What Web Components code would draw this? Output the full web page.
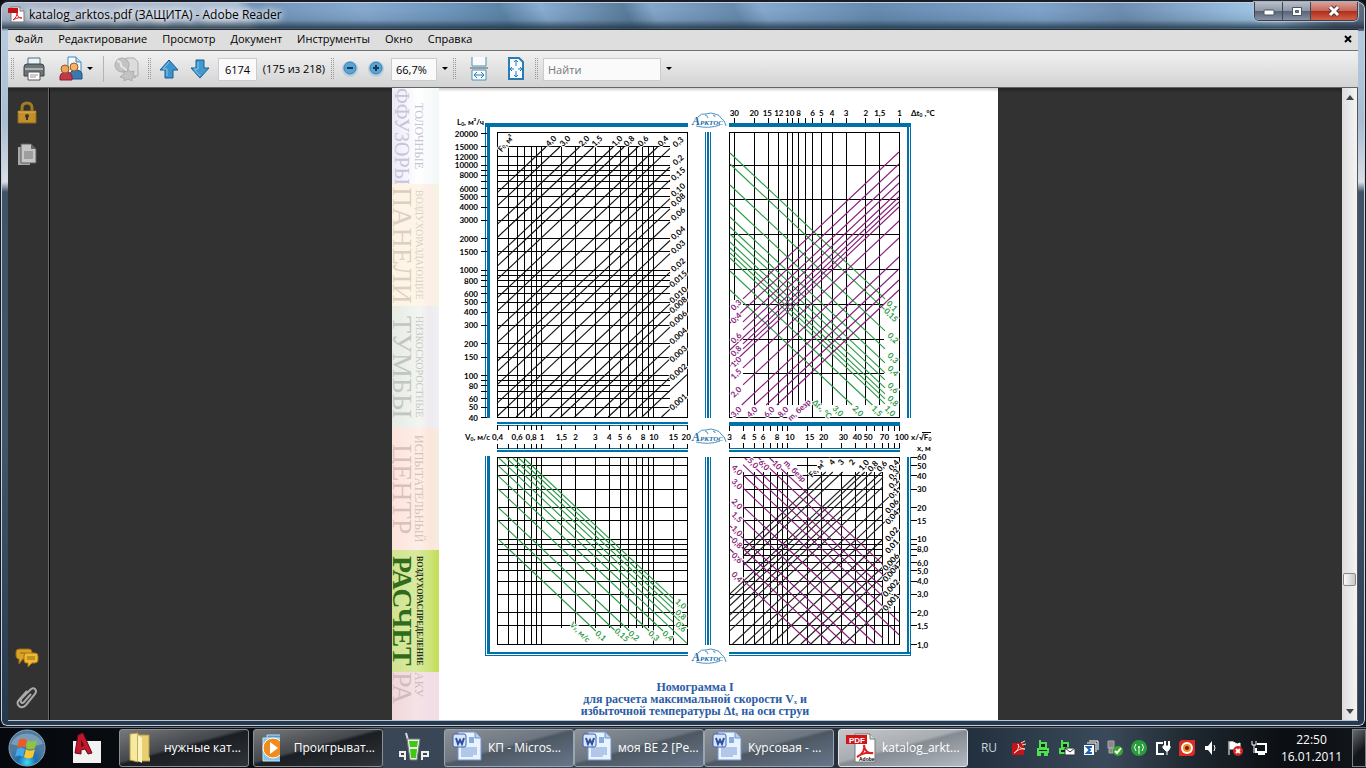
<!DOCTYPE html>
<html lang="ru">
<head>
<meta charset="utf-8">
<title>katalog_arktos.pdf (ЗАЩИТА) - Adobe Reader</title>
<style>
  body {
    margin: 0;
    height: 100vh;
    display: flex;
    flex-direction: column;
    overflow: hidden;
    background: #0c1015;
    font: 12px/16px "Open Sans", "Noto Sans", sans-serif;
    color: #000;
  }
</style>
</head>
<body>
<reader-window>
  <title-bar slot="title">katalog_arktos.pdf (ЗАЩИТА) - Adobe Reader</title-bar>
  <menu-bar slot="menu"></menu-bar>
  <tool-bar slot="tools"></tool-bar>
  <side-panel slot="side"></side-panel>
  <pdf-page>
    <side-tab slot="tabs" tone="blue" big="ФФУЗОРЫ" size="m">ТОЛОЧНЫЕ</side-tab>
    <side-tab slot="tabs" tone="yellow" big="ПАНЕЛИ" size="s">ВОЗДУХОРАЗДАЮЩИЕ</side-tab>
    <side-tab slot="tabs" tone="gray" big="ТУМБЫ" size="s">НИЗКОСКОРОСТНЫЕ</side-tab>
    <side-tab slot="tabs" tone="rose" big="ЦЕНТР" size="m">ИСПЫТАТЕЛЬНЫЙ</side-tab>
    <side-tab slot="tabs" tone="green" big="РАСЧЕТ" size="xs">ВОЗДУХОРАСПРЕДЕЛЕНИЕ</side-tab>
    <side-tab slot="tabs" tone="pink" big="РА" size="m">АКУ</side-tab>
    <nomogram-chart></nomogram-chart>
  </pdf-page>
</reader-window>
<task-bar></task-bar>

<script>
const define = (name, html, setup) => {
  customElements.define(name, class extends HTMLElement {
    constructor() {
      super();
      this.attachShadow({ mode: 'open' });
      this.shadowRoot.innerHTML = html;
    }

    connectedCallback() {
      if (setup) {
        setup(this, this.shadowRoot);
      }
    }
  });
};

const buttonReset = `
  button {
    display: flex;
    align-items: center;
    justify-content: center;
    margin: 0;
    padding: 0;
    border: 0;
    background: none;
    font: inherit;
    color: inherit;
  }
`;

define('reader-window', `
  <style>
    :host {
      flex: 1;
      min-height: 0;
      display: flex;
      flex-direction: column;
      box-sizing: border-box;
      padding: 0 7px 5px;
      border: 1px solid #15181f;
      border-top: 2px solid #1a1d28;
      border-radius: 8px 8px 7px 7px;
      background:
        linear-gradient(#fff, #fff) top / 100% 1px no-repeat,
        linear-gradient(180deg, transparent 0 8px, rgba(20, 40, 60, 0.1) 18px, rgba(30, 48, 62, 0.8) 26px, transparent 28px),
        linear-gradient(65deg, #a9b6c9 0 7%, #adbfd5 18%, #6f93b6 19%, #86a9cf 27%, #6f96bd 33%, #5d84a6 37%, #88acd2 40%, #5b7d9b 46%, #84a6ca 48%, #688bad 54%, #85a8ce 56%, #668bb0 64%, #7fa3cb 76%, #6e8db0 82%, #a4cbeb 93%, #5e6a80 97%) top / 100% 29px no-repeat,
        linear-gradient(180deg, #b6cbe0 29px, #a9bdd3 120px, #d9dfe6 180px, #3f5267 190px, #41556c 60%, #25384e);
      box-shadow: inset 0 0 0 1px #c5d0dc;
    }

    #client {
      flex: 1;
      min-height: 0;
      display: flex;
      flex-direction: column;
      border-top: 1px solid #222b31;
      border-bottom: 1px solid #b8c6d4;
      background: #323232;
    }

    #body {
      flex: 1;
      min-height: 0;
      display: flex;
    }

    #doc {
      flex: 1;
      min-width: 0;
      display: flex;
      justify-content: center;
      overflow: hidden;
      background: linear-gradient(#232323, #323232 5px);
    }
  </style>

  <slot name="title"></slot>
  <div id="client">
    <slot name="menu"></slot>
    <slot name="tools"></slot>
    <div id="body">
      <slot name="side"></slot>
      <div id="doc"><slot></slot></div>
      <scroll-bar></scroll-bar>
    </div>
  </div>
`);

define('title-bar', `
  <style>
    ${buttonReset}
    :host {
      display: flex;
      height: 27px;
      align-items: flex-start;
    }

    #icon {
      width: 17px;
      height: 17px;
      margin: 4px 4px 0 0;
    }

    #label {
      flex: 1;
      line-height: 26px;
      text-shadow: 0 0 6px #fff, 0 0 8px #fff, 0 0 10px #fff;
    }

    #controls {
      display: flex;
      overflow: hidden;
      height: 18px;
      border: 1px solid #3b424e;
      border-top: 0;
      border-radius: 0 0 5px 5px;
      box-shadow: 0 0 1px 1px #b9c2cf;
    }

    #controls button {
      width: 28px;
      height: 18px;
      border-right: 1px solid #3e4654;
      background: linear-gradient(#b9bfca, #8f98a8 48%, #566173 50%, #8792a4);
    }

    #controls button:last-child {
      width: 46px;
      border: 0;
      background: linear-gradient(#d8a198, #c5685a 48%, #ad2d18 50%, #d0614a);
    }
  </style>

  <svg id="icon" viewBox="0 0 17 17">
    <path d="M3 1h9l4 4v11H3z" fill="#fff" stroke="#777"/>
    <path d="M12 1v4h4" fill="#ddd" stroke="#777"/>
    <path d="M0 2h10v5H0z" fill="#c80f14"/>
    <path d="M5 14c3-2 4-5 4-7 0 3 2 5 5 5-4-1-7 1-9 2z" fill="none" stroke="#e02020"/>
  </svg>
  <span id="label"><slot></slot></span>
  <div id="controls">
    <button aria-label="Свернуть"><svg width="12" height="10"><rect x="1" y="4" width="10" height="5" rx="1" fill="#fff" stroke="#4b5564"/></svg></button>
    <button aria-label="Развернуть"><svg width="12" height="11"><path d="M1.500 1.500h9v8h-9z" fill="#fff" stroke="#4b5564"/><path d="M4.500 4.500h3v2h-3z" fill="#77859a" stroke="#4b5564"/></svg></button>
    <button aria-label="Закрыть"><svg width="14" height="12"><path d="M3 2l8 8M11 2l-8 8" stroke="#5d3035" stroke-width="5"/><path d="M3 2l8 8M11 2l-8 8" stroke="#fff" stroke-width="3"/></svg></button>
  </div>
`);

define('menu-bar', `
  <style>
    ${buttonReset}
    :host {
      display: flex;
      height: 20px;
      gap: 15px;
      padding: 0 6px 0 7px;
      background: #dedede;
      border-bottom: 1px solid #707070;
      font-size: 11px;
    }

    button {
      height: 18px;
    }

    #close {
      margin-left: auto;
    }
  </style>

  <button>Файл</button>
  <button>Редактирование</button>
  <button>Просмотр</button>
  <button>Документ</button>
  <button>Инструменты</button>
  <button>Окно</button>
  <button>Справка</button>
  <button id="close" aria-label="Закрыть документ"><svg width="8" height="8"><path d="M1 1l6 6M7 1l-6 6" stroke="#000" stroke-width="2"/></svg></button>
`);

const caret = '<svg width="6" height="4"><path d="M0 0h6l-3 3z"/></svg>';

define('tool-bar', `
  <style>
    ${buttonReset}
    :host {
      display: flex;
      align-items: center;
      height: 36px;
      gap: 4px;
      padding-left: 3px;
      border-bottom: 1px solid #666;
      background: linear-gradient(#f1f1f1, #d3d3d3);
      font-size: 11px;
    }

    button {
      height: 30px;
    }

    i {
      width: 4px;
      height: 22px;
      background:
        repeating-linear-gradient(#999 0 1px, transparent 1px 2px) 0 0 / 1px 100% no-repeat,
        repeating-linear-gradient(#999 0 1px, transparent 1px 2px) 2px 0 / 1px 100% no-repeat;
    }

    hr {
      width: 1px;
      height: 26px;
      margin: 0;
      border: 0;
      background: #b5b5b5;
    }

    input {
      box-sizing: border-box;
      height: 23px;
      margin: 0;
      padding: 0 4px;
      border: 1px solid #c8cdd2;
      background: #fafafa;
      font: inherit;
      color: #000;
    }

    #pageno {
      width: 39px;
      text-align: center;
    }

    #zoom {
      width: 46px;
    }

    #find {
      width: 118px;
    }

    input::placeholder {
      color: #777;
    }

    label {
      width: 66px;
      text-align: center;
      white-space: nowrap;
    }

    .w8 { width: 8px; }
    .w22 { width: 22px; }
    .w26 { width: 26px; }
    .w28 { width: 28px; }
    .w30 { width: 30px; }
    .w36 { width: 36px; }
    .w46 { width: 46px; gap: 4px; }
  </style>

  <i></i>
  <button class="w30" aria-label="Печать">
    <svg width="24" height="24">
      <path d="M6 1h12v9H6z" fill="#e8f4f8" stroke="#55707c"/>
      <path d="M2 10q0-3 3-3h14q3 0 3 3v9H2z" fill="#6c7478" stroke="#3d4346"/>
      <path d="M3 12h18" stroke="#a9b1b4" stroke-width="2"/>
      <path d="M6 15h12v8H6z" fill="#fff" stroke="#555"/>
      <path d="M8 18h8M8 20h6" stroke="#999"/>
    </svg>
  </button>
  <button class="w46" aria-label="Совместная работа">
    <svg width="24" height="26">
      <path d="M9 1h8l5 5v14H9z" fill="#f8fcff" stroke="#3a87bd"/>
      <path d="M17 1v5h5" fill="#b7dcf1" stroke="#3a87bd"/>
      <path d="M11 21q-1-7 6-7t6 7v2H11z" fill="#3778b5" stroke="#205080"/>
      <circle cx="15" cy="11" r="4" fill="#f2b36b" stroke="#9b5a22"/>
      <path d="M1 24q-1-8 6-8t6 8z" fill="#c23a48" stroke="#862330"/>
      <circle cx="6" cy="13" r="4" fill="#e9a45e" stroke="#9b5a22"/>
    </svg>
    ${caret}
  </button>
  <hr>
  <button class="w36" aria-label="Создать PDF">
    <svg width="26" height="26" fill="#c3c3c3" stroke="#adadad">
      <path d="M13 2h8l4 4v14H13z" fill="#dcdcdc"/>
      <circle cx="9" cy="9" r="7"/>
      <path d="M4 5q5 1 4 5l7 5" fill="none" stroke="#e6e6e6" stroke-width="2"/>
      <path d="M15 13l2 3 4-1-1 4 3 2-4 1v3l-4-2-4 2v-3l-4-1 4-3-1-3 4 1z"/>
    </svg>
  </button>
  <i></i>
  <button class="w26" aria-label="Предыдущая страница"><svg width="22" height="22"><path d="M11 2l9 10h-5v8H7v-8H2z" fill="#3d93cc" stroke="#175f92"/><path d="M11 4l-6 7h4v7" fill="none" stroke="#8dc7e8"/></svg></button>
  <button class="w28" aria-label="Следующая страница"><svg width="22" height="22"><path d="M11 20l9-10h-5V2H7v8H2z" fill="#4198d1" stroke="#175f92"/><path d="M9 4v7H5l6 7" fill="none" stroke="#8dc7e8"/></svg></button>
  <input id="pageno" value="6174">
  <label for="pageno">(175 из 218)</label>
  <i></i>
  <button class="w22" aria-label="Уменьшить"><svg width="18" height="18"><circle cx="9" cy="9" r="8" fill="#b5cfdf"/><circle cx="9" cy="8" r="6" fill="#5ba3d3" stroke="#3f7fa9"/><path d="M6 8h6" stroke="#103c60" stroke-width="2"/></svg></button>
  <button class="w22" aria-label="Увеличить"><svg width="18" height="18"><circle cx="9" cy="9" r="8" fill="#b5cfdf"/><circle cx="9" cy="8" r="6" fill="#5ba3d3" stroke="#3f7fa9"/><path d="M6 8h6M9 5v6" stroke="#103c60" stroke-width="2"/></svg></button>
  <input id="zoom" value="66,7%" aria-label="Масштаб">
  <button class="w8" aria-label="Выбрать масштаб">${caret}</button>
  <i></i>
  <button class="w36" aria-label="По ширине">
    <svg width="18" height="24"><path d="M2 0v9h14V0M2 23V13h14v10z" fill="#f7fbff" stroke="#4f8fb9"/><path d="M0 11h18" stroke="#555"/><path d="M4 18h10M7 15l-3 3 3 3M11 15l3 3-3 3" fill="none" stroke="#287bb3"/></svg>
  </button>
  <button class="w30" aria-label="Страница целиком">
    <svg width="18" height="24"><path d="M2 1h10l4 4v17H2z" fill="#f7fbff" stroke="#287bb3" stroke-width="2"/><path d="M9 3v6M9 14v6M3 12h4M11 12h4M7 5l2-2 2 2M7 18l2 2 2-2M5 10l-2 2 2 2M13 10l2 2-2 2" fill="none" stroke="#287bb3"/></svg>
  </button>
  <i></i>
  <input id="find" placeholder="Найти" aria-label="Найти">
  <button class="w8" aria-label="Параметры поиска">${caret}</button>
`);

define('side-panel', `
  <style>
    ${buttonReset}
    :host {
      display: flex;
      flex-direction: column;
      align-items: center;
      gap: 18px;
      box-sizing: border-box;
      width: 42px;
      padding: 13px 3px 10px 0;
      border-right: 1px solid #080808;
      background: linear-gradient(#232323, #323232 5px);
      box-shadow: inset -1px 0 #686868;
    }

    .space {
      flex: 1;
    }
  </style>

  <button aria-label="Защита"><svg width="20" height="24"><path d="M5 12V7q0-5 5-5t5 5v5" fill="none" stroke="#a27b20" stroke-width="3"/><path d="M1 10h18v12H1z" fill="#c1902b" stroke="#8c651a"/><path d="M1 11h18" stroke="#dfb55b"/><circle cx="10" cy="15" r="2" fill="#3a342a"/><path d="M10 15v4" stroke="#3a342a" stroke-width="2"/></svg></button>
  <button aria-label="Страницы"><svg width="20" height="24"><path d="M1 4h12v18H1z" fill="#a8a8a8"/><path d="M4 1h10l5 5v14H4z" fill="#c6c6c6" stroke="#5d5d5d"/><path d="M14 1v5h5" fill="#666"/><path d="M7 9h9M7 11h9M7 13h9M7 15h9" stroke="#777"/></svg></button>
  <span class="space"></span>
  <button aria-label="Комментарии"><svg width="24" height="20"><path d="M4 1h10q3 0 3 3v5q0 2-3 2H8l-4 5v-5H3q-2-1-2-3V4q0-3 3-3z" fill="#d9a424" stroke="#9c641a"/><path d="M11 5h9q3 0 3 3v4q0 3-3 3h-3l-4 4v-4h-2q-2 0-2-3V8q0-3 2-3z" fill="#edbb2c" stroke="#a3721b"/><path d="M5 5h5M12 9h8M12 11h8" stroke="#8c671b"/></svg></button>
  <button aria-label="Вложения"><svg width="22" height="24" fill="none" stroke="#aaa" stroke-width="2"><path d="M15 8l-7 8q-2 2-3 0t1-4l8-8q3-3 5-1t0 5l-9 11q-4 4-7 1t0-6l8-9"/></svg></button>
`);

define('scroll-bar', `
  <style>
    ${buttonReset}
    :host {
      display: flex;
      flex-direction: column;
      align-items: center;
      width: 15px;
      border-right: 1px solid #555;
      background: linear-gradient(90deg, #ddd, #f4f4f4);
    }

    button {
      width: 15px;
      height: 17px;
    }

    #track {
      flex: 1;
      display: grid;
      grid-template-rows: 466fr 13px 117fr;
    }

    #thumb {
      grid-row: 2;
      width: 13px;
      height: 13px;
      border: 1px solid #888;
      border-radius: 2px;
      background: linear-gradient(90deg, #fafafa, #c8c8cc);
    }
  </style>
  <button aria-label="Вверх"><svg width="8" height="6"><path d="M4 1l4 5H0z" fill="#444"/></svg></button>
  <div id="track"><button id="thumb" aria-label="Положение"></button></div>
  <button aria-label="Вниз"><svg width="8" height="6"><path d="M4 5l4-5H0z" fill="#444"/></svg></button>
`);

define('pdf-page', `
  <style>
    :host {
      display: flex;
      width: 606px;
      margin-right: 2px;
      background: linear-gradient(#d0d0d0, #fff 4px);
    }

    #tabs {
      display: flex;
      flex-direction: column;
      width: 47px;
    }

    main {
      flex: 1;
    }

    p {
      margin: 3px 47px 0 0;
      text-align: center;
      font: bold 12px/12px "Liberation Serif", serif;
      white-space: nowrap;
      color: #2a5ca6;
    }

    sub {
      font-size: 6px;
      line-height: 0;
      vertical-align: -1px;
    }
  </style>

  <div id="tabs"><slot name="tabs"></slot></div>
  <main>
    <slot></slot>
    <p>Номограмма I<br>для расчета максимальной скорости V<sub>x</sub> и<br>избыточной температуры Δt<sub>x</sub> на оси струи</p>
  </main>
`);

define('side-tab', `
  <style>
    :host {
      display: flex;
      flex-direction: row-reverse;
      justify-content: flex-end;
      flex: none;
      height: 122px;
      clip-path: inset(0);
      font-family: "Liberation Serif", serif;
    }

    :host([tone=blue]) { height: 96px; background: linear-gradient(90deg, #e9eaf8, #fff 55%, #f3f7f8); color: #c9c3d6; }
    :host([tone=yellow]) { background: linear-gradient(90deg, #fdf3e4, #fcf6ea 60%, #fdeee8 80%, #f4f5e0); color: #dccfbf; }
    :host([tone=gray]) { background: linear-gradient(90deg, #e6ebe4, #f3f5f1 60%, #efeaf1 80%, #eef1f2); color: #c2c6c0; }
    :host([tone=rose]) { background: linear-gradient(90deg, #fde3dc, #fcefe8 60%, #fce6da 80%, #f5ebe0); color: #d9c0b8; }
    :host([tone=green]) { background: linear-gradient(90deg, #cfe391, #d9ea9f 50%, #cde47b 80%, #c3dd55); color: #222d1e; }
    :host([tone=pink]) { flex: 1; min-height: 0; background: linear-gradient(90deg, #efd7d8, #f4e2e6 50%, #f1dde6); color: #d3babf; }

    span {
      writing-mode: vertical-rl;
      text-align: center;
      white-space: nowrap;
    }

    #big {
      font-size: 28px;
      line-height: 20px;
      width: 20px;
    }

    :host([tone=green]) #big { color: #306b1c; font-weight: bold; }
    :host([tone=blue]) #big { font-size: 20px; }
    :host([tone=pink]) span { text-align: start; }

    #small {
      font-size: 12px;
      line-height: 14px;
    }

    :host([size=s]) #small { font-size: 10px; }
    :host([size=xs]) #small { font-size: 8px; font-weight: bold; }
  </style>
  <span id="small"><slot></slot></span>
  <span id="big"></span>
`, (host, root) => {
  root.getElementById('big').textContent = host.getAttribute('big');
});

define('nomogram-chart', `
  <style>
    :host {
      display: block;
    }

    svg {
      display: block;
      width: 559px;
      height: 590px;
      font: bold 8px Lato, "Open Sans", sans-serif;
    }

    .tilt {
      paint-order: stroke;
      stroke: #fff;
      stroke-width: 2px;
    }
  </style>
  <svg viewBox="439 88 559 590"></svg>
`, (host, root) => {
  const DEC_X = 111.8;
  const DEC_Y = 105.2;
  const SLOPE = DEC_Y / DEC_X;
  const GREEN = '#2a9a45';
  const PURPLE = '#861c7a';
  const BLUE = '#0071a8';
  const log = Math.log10;
  const out = [];

  const snap = v => Math.floor(v) + 0.5;
  const hline = (x1, x2, y, c = '#000', w = 1) => out.push(`<path d="M${x1} ${w === 1 ? snap(y) : y}H${x2}" stroke="${c}" stroke-width="${w}"/>`);
  const vline = (x, y1, y2, c = '#000', w = 1) => out.push(`<path d="M${w === 1 ? snap(x) : x} ${y1}V${y2}" stroke="${c}" stroke-width="${w}"/>`);
  const text = (s, x, y, c = '#000', rot = 0, anchor = 'middle') =>
    out.push(`<text x="${x}" y="${y}" fill="${c}" text-anchor="${anchor}"${rot ? ` class="tilt" transform="rotate(${rot} ${x} ${y})"` : ''}>${s}</text>`);

  // Straight line y = y0 + k * (x - x0), cut to the box
  const diag = (x0, y0, k, box, c) => {
    const [l, t, r, b] = box;
    const xa = x0 + (t - y0) / k;
    const xb = x0 + (b - y0) / k;
    const from = Math.max(l, Math.min(xa, xb));
    const to = Math.min(r, Math.max(xa, xb));
    if (from < to) {
      out.push(`<path d="M${from} ${y0 + k * (from - x0)}L${to} ${y0 + k * (to - x0)}" stroke="${c}" stroke-width="1.1"/>`);
    }
  };

  const vx = v => 497.5 + log(v / 0.4) * DEC_X;
  const ly = v => 417.5 - log(v / 40) * DEC_Y;
  const tx = v => 899.5 - log(v) * DEC_X;
  const rx = v => 729.5 + log(v / 3) * DEC_X;
  const my = v => 644.5 - log(v) * DEC_Y;

  const speeds = [0.5, 0.6, 0.7, 0.8, 0.9, 1, 1.5, 2, 3, 4, 5, 6, 7, 8, 9, 10];
  const metres = [1.5, 2, 3, 4, 5, 6, 7, 8, 9, 10, 15, 20, 30, 40, 50];
  const ratios = [4, 5, 6, 7, 8, 9, 10, 15, 20, 30, 40, 50, 60, 70, 80, 90];

  // Blue frames
  hline(485, 688, 125, BLUE, 4);
  hline(729, 911, 125, BLUE, 4);
  vline(485, 123, 418, BLUE);
  vline(488.5, 123, 418, BLUE, 3);
  vline(485, 456, 655, BLUE);
  vline(488.5, 456, 654, BLUE, 3);
  vline(908, 123, 418, BLUE, 2);
  vline(910, 123, 418, BLUE);
  vline(908, 457, 654, BLUE, 2);
  vline(910, 457, 656, BLUE);
  [[485, 688], [729, 911]].forEach(([a, b]) => {
    hline(a + (a < 500 ? 2 : 0), b, 653, BLUE, 2);
    hline(a, b, 655, BLUE);
  });
  [[132, 418], [457, 645]].forEach(([a, b]) => {
    vline(705, a, b, BLUE);
    vline(708, a, b, BLUE, 2);
    vline(710, a, b, BLUE);
  });
  hline(497, 688, 423, BLUE, 2);
  hline(497, 688, 425, BLUE);
  hline(729, 900, 424, BLUE, 4);
  [[497, 688], [729, 900]].forEach(([a, b]) => {
    hline(a, b, 448, BLUE);
    hline(a, b, 451, BLUE, 2);
  });

  // Chart boxes
  [[497.5, 132.5, 190, 285], [729.5, 132.5, 170, 285], [497.5, 457.5, 190, 187], [729.5, 457.5, 170, 187]]
    .forEach(([x, y, w, h]) => out.push(`<rect x="${x}" y="${y}" width="${w}" height="${h}" fill="none" stroke="#000"/>`));

  // Air flow against speed
  const flows = [15000, 12000];
  [1000, 100, 10].forEach(d => [10, 9, 8, 7, 6, 5, 4, 3, 2, 1.5].forEach(n => {
    if (n * d > 40) {
      flows.push(n * d);
    }
  }));
  speeds.forEach(v => vline(vx(v), 147, 417));
  flows.forEach(v => hline(497, 670, ly(v)));
  [20000, ...flows, 40].forEach(v => hline(481, 487, ly(v)));
  [4, 3, 2, 1.5, 1, 0.8, 0.6, 0.4, 0.3, 0.2, 0.15, 0.1, 0.08, 0.06, 0.04, 0.03, 0.02, 0.015, 0.01, 0.008, 0.006, 0.004, 0.003, 0.002, 0.0015, 0.001].forEach(f => {
    const right = f === 0.0015 ? 687 : 670;
    diag(497.5, ly(1440 * f) + 2, -SLOPE, [497.5, 147, right, 417], '#111');
  });
  [20000, 15000, 12000, 10000, 8000, 6000, 5000, 4000, 3000, 2000, 1500, 1000, 800, 600, 500, 400, 300, 200, 150, 100, 80, 60, 50, 40]
    .forEach(v => text(v, 478, ly(v) + 3, '#000', 0, 'end'));
  text('L<tspan font-size="5" dy="1">0</tspan><tspan dy="-1">, м³/ч</tspan>', 457, 125, '#000', 0, 'start');
  text('F<tspan font-size="5">0</tspan>, м²', 508, 145, '#000', -50);
  [['4,0', 553], ['3,0', 567], ['2,0', 586], ['1,5', 599], ['1,0', 619], ['0,8', 631], ['0,6', 645], ['0,4', 665]].forEach(([s, x]) => text(s, x, 143, '#000', -45));
  [['0,3', 144], ['0,2', 162], ['0,15', 176], ['0,10', 192], ['0,08', 202], ['0,06', 216], ['0,04', 235], ['0,03', 249], ['0,02', 267], ['0,015', 281], ['0,010', 297], ['0,008', 307], ['0,006', 321], ['0,004', 338], ['0,003', 356], ['0,002', 374], ['0,001', 404]]
    .forEach(([s, y]) => text(s, 680, y, '#000', -42));

  // Speed scale
  [0.4, ...speeds, 15, 20].forEach(v => {
    vline(vx(v), 425, 430);
    vline(vx(v), 444, 449);
  });
  text('V<tspan font-size="5" dy="1">0</tspan><tspan dy="-1">, м/с</tspan>', 465, 440, '#000', 0, 'start');
  [['0,4', 0.4], ['0,6', 0.6], ['0,8', 0.8], ['1', 1], ['1,5', 1.5], ['2', 2], ['3', 3], ['4', 4], ['5', 5], ['6', 6], ['8', 8], ['10', 10], ['15', 15], ['20', 19.5]]
    .forEach(([s, v]) => text(s, vx(v), 440));

  // Excess temperature
  [30, 20, 15, 12, 10, 9, 8, 7, 6, 5, 4, 3, 2, 1.5].forEach(v => {
    vline(tx(v), 132, v === 30 ? 300 : v === 6 ? 417 : 405);
    vline(tx(v), 118, 123);
  });
  vline(tx(1), 118, 123);
  [165, 199, 234, 269].forEach(y => hline(729, 900, y));
  [304, 339, 373].forEach(y => hline(743, 884, y));
  [153, 164, 185, 203, 217, 227, 234, 242, 248, 253, 258, 271, 290].forEach(y => diag(730, y, SLOPE, [730, 133, 885, 405], GREEN));
  [152, 164, 175, 183, 191, 197, 202, 207, 221, 238, 257, 269, 280, 290].forEach((y, i) => diag(899, y, -SLOPE, [i % 3 === 1 ? 730 : 743, 133, 899, 405], PURPLE));
  [['30', 30], ['20', 20], ['15', 15.2], ['12', 12], ['10', 9.6], ['8', 8], ['6', 6], ['5', 5], ['4', 4], ['3', 3], ['2', 2], ['1,5', 1.5], ['1', 1]]
    .forEach(([s, v]) => text(s, tx(v), 116));
  text('Δt<tspan font-size="5" dy="1">0</tspan><tspan dy="-1"> ,°C</tspan>', 911, 116, '#000', 0, 'start');
  [['0,3', 738, 307], ['0,4', 738, 320], ['0,6', 738, 340], ['0,8', 738, 353], ['1,0', 738, 364], ['1,5', 738, 376], ['2,0', 738, 394], ['3,0', 738, 414], ['4,0', 754, 414], ['6,0', 771, 414], ['8,0', 785, 414]]
    .forEach(([s, x, y]) => text(s, x, y, PURPLE, -45));
  text('m, безр', 801, 412, PURPLE, -42);
  text('Δt<tspan font-size="5">x</tspan>, °C', 820, 411, GREEN, 45);
  [['0,1', 890, 308], ['0,15', 889, 317], ['0,2', 891, 340], ['0,3', 891, 360], ['0,4', 891, 373], ['0,6', 891, 390], ['0,8', 891, 403], ['3,0', 836, 413], ['2,0', 856, 413], ['1,5', 875, 413], ['1,0', 888, 413]]
    .forEach(([s, x, y]) => text(s, x, y, GREEN, 45));

  // Relative distance scale
  [3, ...ratios, 100].forEach(v => {
    vline(rx(v), 426, 431);
    vline(rx(v), 443, 448);
  });
  [3, 4, 5, 6, 8, 10, 15, 20, 30, 40, 50, 70, 100].forEach(v => text(v, rx(v) + (v > 9 ? 2 : 0), 440));
  text('x/√F<tspan font-size="5" dy="1">0</tspan>', 911, 440, '#000', 0, 'start');
  hline(922, 931, 432);
  text('x, м', 917, 451, '#000', 0, 'start');

  // Axis speed
  [...speeds, 15].forEach(v => vline(vx(v), 458, v > 1 && v < 10 ? 628 : 644));
  metres.forEach(v => hline(497, 687, my(v)));
  [0.1, 0.15, 0.2, 0.3, 0.4, 0.5, 0.6, 0.7, 0.8, 0.9, 1].forEach(v => {
    const long = v === 0.5 || v === 0.7;
    diag(497.5, 538.5 - log(v / 0.1) * DEC_Y, SLOPE, [498, 458, long ? 687 : 673, v < 0.5 ? 631 : 644], GREEN);
  });
  text('V<tspan font-size="5">x</tspan>, м/с', 578, 634, GREEN, 45);
  [['0,1', 599, 638], ['0,15', 620, 637], ['0,2', 632, 638], ['0,3', 652, 638], ['0,4', 666, 638], ['1,0', 679, 606], ['0,8', 679, 617], ['0,6', 679, 629]]
    .forEach(([s, x, y]) => text(s, x, y, GREEN, 42));

  // Distance
  ratios.forEach(v => vline(rx(v), v === 15 ? 458 : v > 70 ? 606 : 472, 644));
  metres.forEach(v => {
    if (v < 50) {
      hline(v > 3 ? 743 : 729, v > 3 ? 883 : 899, my(v));
    }
  });
  hline(797, 817, my(50));
  [1, ...metres, 60].forEach(v => hline(911, 917, my(v)));
  [4, 3, 2, 1, 0.8, 0.6, 0.4, 0.3, 0.2, 0.1, 0.06, 0.04, 0.02, 0.01, 0.006, 0.004, 0.002, 0.001].forEach((f, i) => {
    const right = [9, 11, 15].includes(i) ? 899 : 883;
    diag(729.5, my(3 * Math.sqrt(f)), -SLOPE, [f > 1 ? 743 : 730, 472, right, 644], '#222');
  });
  [0.4, 0.6, 0.8, 1, 1.5, 2, 3, 4, 5, 6, 8, 10].forEach(m => {
    diag(743.5, 580.5 - log(m / 0.4) * DEC_Y, SLOPE, [m > 0.4 && m < 1.5 ? 730 : 743, m > 4 ? 458 : 475, m === 3 || m === 4 ? 899 : 883, 644], PURPLE);
  });
  [['60', 60], ['50', 50], ['40', 40], ['30', 30], ['20', 20], ['15', 15], ['10', 10], ['8,0', 8], ['6,0', 6], ['5,0', 5], ['4,0', 4], ['3,0', 3], ['2,0', 2], ['1,5', 1.5], ['1,0', 1]]
    .forEach(([s, v]) => text(s, 917, my(v) + 3, '#000', 0, 'start'));
  [['4,0', 735, 472], ['3,0', 735, 486], ['2,0', 735, 506], ['1,5', 735, 519], ['1,0', 735, 533], ['0,8', 735, 545], ['0,6', 735, 560], ['0,4', 735, 579], ['5,0', 751, 465], ['6,0', 762, 467], ['10', 775, 467]]
    .forEach(([s, x, y]) => text(s, x, y, PURPLE, 45));
  text('m, безр', 793, 473, PURPLE, 45);
  text('F<tspan font-size="5">0</tspan>, м²', 819, 471, '#000', -45);
  [['4', 834, 464], ['3', 843, 464], ['2', 854, 464], ['1,0', 866, 467], ['0,8', 875, 468], ['0,6', 884, 468], ['0,4', 896, 467], ['0,3', 896, 476], ['0,2', 896, 485], ['0,1', 896, 495], ['0,06', 894, 508], ['0,04', 894, 519], ['0,02', 894, 536], ['0,01', 894, 548], ['0,006', 893, 564], ['0,004', 893, 575], ['0,002', 893, 590], ['0,001', 893, 604]]
    .forEach(([s, x, y]) => text(s, x, y, '#000', -48));

  // Logos between the frames
  [121, 437, 657].forEach(y => {
    out.push(`
      <g fill="none" stroke="#4a93c4">
        <path d="M698 ${y - 4}q3-4 8-3 5-2 9 0 5 1 6 4 4 2 5 8"/>
        <path d="M705 ${y - 6}q3 1 3 3M713 ${y - 6}q3 1 2 2M696 ${y + 5}q13 3 24-1"/>
      </g>
      <g font-family="Liberation Serif" font-style="italic" fill="#1c6aa6">
        <text x="692" y="${y + 4}" font-size="12">А</text>
        <text x="700" y="${y + 4}" font-size="7">РКТОС</text>
      </g>`);
  });

  root.querySelector('svg').innerHTML = out.join('');
});

const wordIcon = `
  <svg width="30" height="30">
    <path d="M6 1h17l6 6v22H6z" fill="#e9f2ff" stroke="#6f94cd"/>
    <path d="M23 1v6h6" fill="#b7cff0" stroke="#6f94cd"/>
    <path d="M17 6h5v6h-5z" fill="#88abe0"/>
    <path d="M9 17h16M9 19h16M9 21h16M9 23h16M9 25h12" stroke="#7b9cd4"/>
    <rect x="1" y="3" width="13" height="13" rx="2" fill="#d9e5fa" stroke="#3a61ad"/>
    <path d="M4 7l2 6 2-4 2 4 2-6" fill="none" stroke="#2c4f9e" stroke-width="2"/>
  </svg>`;

define('task-button', `
  <style>
    ${buttonReset}
    :host {
      display: block;
      width: 130px;
    }

    button {
      box-sizing: border-box;
      justify-content: flex-start;
      width: 100%;
      height: 38px;
      gap: 6px;
      padding: 0 7px;
      overflow: hidden;
      border: 1px solid #8b8f94;
      border-radius: 3px;
      background: linear-gradient(165deg, #77797b, #44474b 45%, #1b1e22 50%, #30353b);
      color: #fff;
      white-space: nowrap;
    }

    :host([wide]) button { gap: 14px; }
    :host([tone=glass]) button { border-color: #9aa5b2; background: linear-gradient(165deg, #8d9094, #6d7681 45%, #4e5863 50%, #66768a); }
    :host([tone=active]) button { border-color: #dfe3e6; background: linear-gradient(165deg, #c5c7ca, #a8adb2 45%, #858b92 50%, #b1b9c2); }
  </style>
  <button><slot name="icon"></slot><slot></slot></button>
`);

define('task-bar', `
  <style>
    ${buttonReset}
    :host {
      display: flex;
      align-items: center;
      height: 40px;
      border-top: 1px solid #67727e;
      background: linear-gradient(90deg, #05090d 0, #0c1217 26%, #47566a 30%, #3d4b5b 33%, #27303a 60%, #22303f 71%, #3b4a5a 81%, #1f2931 87%, #0b0e12 94%, #11161b);
      color: #fff;
    }

    #orb { width: 54px; }
    #cad { width: 65px; }
    #phone { width: 61px; height: 40px; background: #394656; }
    .gap { width: 4px; }
    #group { display: flex; }
    #lang { width: 36px; margin-left: auto; text-align: center; color: #ccd3db; }
    #tray button { width: 24px; height: 30px; }
    #tray { display: flex; }

    time {
      width: 81px;
      text-align: center;
      line-height: 17px;
    }

    #desk {
      box-sizing: border-box;
      width: 14px;
      height: 38px;
      border: 1px solid #7b8085;
      background: linear-gradient(135deg, #666b70, #14171a 60%);
    }
  </style>

  <button id="orb" aria-label="Пуск">
    <svg width="40" height="38">
      <defs><radialGradient id="g" cy=".9"><stop offset="0" stop-color="#3be0ff"/><stop offset=".5" stop-color="#1c6fae"/><stop offset="1" stop-color="#4e7ba0"/></radialGradient></defs>
      <circle cx="20" cy="19" r="18" fill="url(#g)" stroke="#8aa4b8"/>
      <path d="M4 15a17 16 0 0 1 32 0q-16 5-32 0z" fill="#fff" opacity=".25"/>
      <path d="M12 11q4-3 8 0l-2 8q-4-3-8 0z" fill="#ee5a24"/>
      <path d="M21 11q4 3 9 0l-2 8q-5 3-9 0z" fill="#8cc63c"/>
      <path d="M10 20q4-3 8 0l-2 8q-4-3-8 0z" fill="#45a9e8"/>
      <path d="M19 20q4 3 9 0l-2 8q-5 3-9 0z" fill="#fbc62d"/>
    </svg>
  </button>
  <button id="cad" aria-label="AutoCAD">
    <svg width="30" height="32"><path d="M1 9h28v22H1z" fill="#f2f2f2"/><path d="M3 21L6 3l5-2 9 20-4 1-3-5-4 1v4z" fill="#c3162a" stroke="#640d18"/><path d="M9 7l3 7-3 1z" fill="#5b0f18"/></svg>
  </button>
  <task-button wide>
    <svg slot="icon" width="28" height="32"><path d="M3 2l8-1v29l-8-2z" fill="#f7e9a0" stroke="#b49a45"/><path d="M11 3h11v22l3 4H11z" fill="#e7cf72" stroke="#b49a45"/><path d="M11 3l4 3v25l-4-2z" fill="#fbf3bd"/></svg>нужные кат...
  </task-button>
  <span class="gap"></span>
  <task-button wide>
    <svg slot="icon" width="28" height="28"><path d="M6 1h21v23H6z" fill="#4e9ccc" stroke="#b8e0f4"/><path d="M2 4h21v23H2z" fill="#87c4e6" stroke="#c5e8f8"/><circle cx="12" cy="14" r="10" fill="#f18b1e" stroke="#fff"/><path d="M9 8l8 6-8 6z" fill="#fff"/></svg>Проигрыват...
  </task-button>
  <button id="phone" aria-label="Модем">
    <svg width="34" height="32"><path d="M9 1l2 7" stroke="#ddd" stroke-width="2"/><path d="M10 7h13l-3 21h-7z" fill="#e9efe9" stroke="#777"/><path d="M12 9h9l-1 6h-7zM13 17h7l-1 9h-5z" fill="#3fc716"/><path d="M9 20H3v4h6M8 20v8M25 28v-8h6v4h-6" fill="none" stroke="#eee" stroke-width="2"/></svg>
  </button>
  <div id="group">
    <task-button tone="glass"><span slot="icon">${wordIcon}</span>КП - Micros...</task-button>
    <task-button tone="glass"><span slot="icon">${wordIcon}</span>моя ВЕ 2 [Ре...</task-button>
    <task-button tone="glass"><span slot="icon">${wordIcon}</span>Курсовая - ...</task-button>
  </div>
  <span class="gap"></span>
  <task-button tone="active">
    <svg slot="icon" width="30" height="32"><path d="M9 2h15l5 5v23H9z" fill="#fff" stroke="#777"/><path d="M24 2v5h5" fill="#ddd" stroke="#777"/><path d="M0 3h21v9H0z" fill="#d01518"/><path d="M11 25c6-3 8-8 7-12 0 5 4 9 9 8-6-1-11 0-16 4z" fill="none" stroke="#e02020" stroke-width="2"/><text x="3" y="11" fill="#fff" font-family="Liberation Sans" font-size="8" font-weight="bold">PDF</text><text x="13" y="29" font-family="Liberation Sans" font-size="5" font-weight="bold">Adobe</text></svg>katalog_arkt...
  </task-button>

  <span id="lang">RU</span>
  <div id="tray">
    <button aria-label="Acrobat"><svg width="16" height="16"><path d="M1 3h12v12H1z" fill="#c3141a"/><path d="M3 13c5-3 5-7 4-9 1 4 4 5 7 5-4-1-7 1-11 4zM10 3l4-2M11 5l4-1" fill="none" stroke="#ffe3c8"/></svg></button>
    <button aria-label="Модем"><svg width="16" height="16"><path d="M5 0v3M5 3h6v5H5zM3 9h10v3H3zM3 13h2v2H3zM10 13h2v2h-2z" fill="#122" stroke="#4de14d" stroke-width="2"/></svg></button>
    <button aria-label="Сообщения"><svg width="16" height="16"><path d="M3 0v3M3 3h6v5H3zM1 9h8v4H1z" fill="#122" stroke="#4de14d" stroke-width="2"/><path d="M6 8h10v7H6z" fill="#fff" stroke="#333"/><path d="M6 8l5 4 5-4" fill="none" stroke="#333"/></svg></button>
    <button aria-label="Сумма"><svg width="16" height="16"><path d="M6 1h9v9M4 3h9v9" fill="none" stroke="#fff"/><path d="M1 5h10v10H1z" fill="#fff"/><path d="M9 7H4l3 3-3 3h5" fill="none" stroke="#1763b8" stroke-width="2"/></svg></button>
    <button aria-label="Устройство"><svg width="16" height="16"><path d="M1 1h6v7H1zM2 8h4v5H2z" fill="#888" stroke="#aaa"/><circle cx="11" cy="11" r="5" fill="#36a82b"/><path d="M8 11l2 2 4-5" fill="none" stroke="#fff" stroke-width="2"/></svg></button>
    <button aria-label="Сеть"><svg width="16" height="16"><circle cx="8" cy="8" r="8" fill="#269e3b"/><path d="M8 7v7M5 4q-3 3 0 7M11 4q3 3 0 7" fill="none" stroke="#fff"/><circle cx="8" cy="7" r="1" fill="#fff"/></svg></button>
    <button aria-label="Питание"><svg width="16" height="16" fill="none" stroke="#fff"><path d="M8 3H2v11h7" stroke-width="2"/><path d="M10 1v5M14 1v5" stroke-width="2"/><path d="M8 6h7v2l-2 3h-2L8 8zM12 10v5" fill="#fff"/></svg></button>
    <button aria-label="Антивирус"><svg width="16" height="16"><path d="M4 0h12v12q0 4-4 4H0V4q0-4 4-4z" fill="#df2b20"/><circle cx="8" cy="8" r="6" fill="#fff"/><circle cx="8" cy="8" r="4" fill="#f08a24"/><circle cx="8" cy="8" r="2" fill="#741c17"/></svg></button>
    <button aria-label="Громкость"><svg width="16" height="16"><path d="M2 6h3l4-5v14l-4-5H2z" fill="#fff"/><path d="M11 5q2 3 0 6" fill="none" stroke="#fff"/></svg></button>
    <button aria-label="Уведомления"><svg width="16" height="16"><path d="M2 1v14M3 2q3-1 5 1t5 0v6H3z" fill="#fff" stroke="#fff"/><circle cx="11" cy="11" r="5" fill="#d8241d"/><path d="M9 9l4 4M13 9l-4 4" stroke="#fff" stroke-width="2"/></svg></button>
    <button aria-label="Подключение"><svg width="16" height="16" fill="none" stroke="#fff"><path d="M6 4h9v8H5V8M7 14h7M10 12v2" stroke-width="2"/><path d="M1 1v4h4V1M3 5v8"/></svg></button>
  </div>
  <time datetime="2011-01-16T22:50">22:50<br>16.01.2011</time>
  <button id="desk" aria-label="Показать рабочий стол"></button>
`);
</script>
</body>
</html>
